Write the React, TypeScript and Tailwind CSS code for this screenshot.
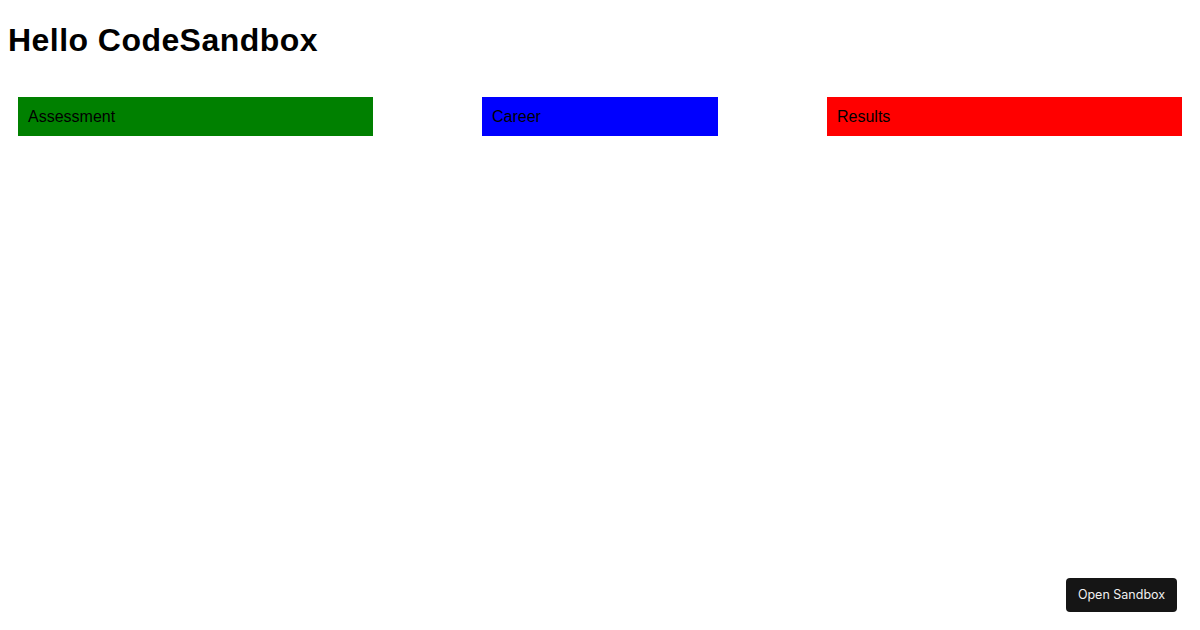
export default function App() {
  return (
    <div className="min-h-[630px] bg-white px-2 pt-0 text-black" style={{ fontFamily: '"Liberation Sans", Arial, sans-serif' }}>
      <h1 className="mb-[28px] mt-[21.5px] text-[32px] font-bold leading-[37px] tracking-[0.45px]">Hello CodeSandbox</h1>
      <div className="flex justify-between">
        <div className="m-[10px] w-[355px] bg-[#008000] px-[10px] py-[10px] text-base leading-[19px]">Assessment</div>
        <div className="m-[10px] w-[236px] bg-[#0000ff] px-[10px] py-[10px] text-base leading-[19px]">Career</div>
        <div className="m-[10px] w-[355px] bg-[#ff0000] px-[10px] py-[10px] text-base leading-[19px]">Results</div>
      </div>
      <button
        className="fixed bottom-[18px] right-[23px] flex h-[34px] w-[111px] items-center justify-center rounded-[4px] bg-[#151515] text-[12.5px] text-[#f0f0f0]"
        style={{ fontFamily: 'Inter, "Liberation Sans", sans-serif' }}
      >
        Open Sandbox
      </button>
    </div>
  );
}
